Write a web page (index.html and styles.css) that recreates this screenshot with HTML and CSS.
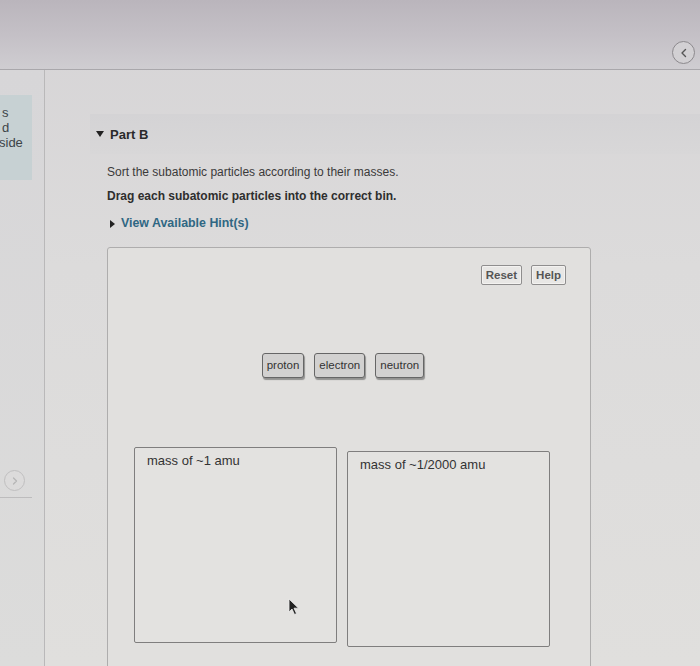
FILE: index.html
```html
<!DOCTYPE html>
<html>
<head>
<meta charset="utf-8">
<link rel="stylesheet" href="styles.css">
</head>
<body>
<div class="page">
  <header class="topbar">
    <span class="round-btn top-btn">
      <svg width="12" height="12" viewBox="0 0 12 12"><path d="M7.5 2.5 L4 6 L7.5 9.5" fill="none" stroke="#555" stroke-width="1.4" stroke-linecap="round" stroke-linejoin="round"/></svg>
    </span>
  </header>
  <div class="main">
    <aside class="sidebar">
      <div class="note">
        <div class="nl l1">s</div>
        <div class="nl l2">d</div>
        <div class="nl l3">side</div>
      </div>
      <div class="toggle-wrap">
        <span class="round-btn side-btn">
          <svg width="10" height="10" viewBox="0 0 10 10"><path d="M3.5 2 L6.5 5 L3.5 8" fill="none" stroke="#b5b5b5" stroke-width="1.2" stroke-linecap="round" stroke-linejoin="round"/></svg>
        </span>
      </div>
    </aside>
    <section class="content">
      <div class="part-head">
        <span class="caret-down"></span>
        <span class="part-title">Part B</span>
      </div>
      <div class="part-body">
        <p class="instr">Sort the subatomic particles according to their masses.</p>
        <p class="instr bold">Drag each subatomic particles into the correct bin.</p>
        <div class="hint"><span class="caret-right"></span>View Available Hint(s)</div>
        <div class="dnd">
          <div class="tools">
            <span class="tool-btn">Reset</span>
            <span class="tool-btn">Help</span>
          </div>
          <div class="tiles">
            <span class="tile">proton</span>
            <span class="tile">electron</span>
            <span class="tile">neutron</span>
          </div>
          <div class="bins">
            <div class="bin"><span class="bin-label">mass of ~1 amu</span>
              <svg class="cursor" width="12" height="18" viewBox="0 0 12 18"><path d="M1 1 L1 14 L4 11 L6.5 16.5 L8.5 15.6 L6 10.2 L10.5 10.2 Z" fill="#222" stroke="#eee" stroke-width="0.8"/></svg>
            </div>
            <div class="bin bin2"><span class="bin-label">mass of ~1/2000 amu</span></div>
          </div>
        </div>
      </div>
    </section>
  </div>
</div>
</body>
</html>
```

FILE: styles.css
```css
html, body {
  margin: 0;
  padding: 0;
}
body {
  width: 700px;
  height: 666px;
  overflow: hidden;
  font-family: "Liberation Sans", Arial, sans-serif;
  color: #333;
  background: #dad9d9;
}
.page {
  width: 700px;
  height: 666px;
  display: flex;
  flex-direction: column;
  background: linear-gradient(180deg, #d6d4d6 0%, #dcdbdb 40%, #e0dfdd 100%);
}
.topbar {
  height: 70px;
  flex: none;
  display: flex;
  justify-content: flex-end;
  align-items: flex-end;
  padding: 0 5px 5px 0;
  box-sizing: border-box;
  background: linear-gradient(180deg, #bab5bc 0%, #c4c0c6 50%, #cfcdd1 100%);
  border-bottom: 1px solid #a9a7ab;
}
.round-btn {
  display: flex;
  align-items: center;
  justify-content: center;
  border-radius: 50%;
  box-sizing: border-box;
}
.top-btn {
  width: 23px;
  height: 23px;
  border: 1.5px solid #8c898d;
  background: #d2d0d3;
}
.main {
  flex: 1;
  display: flex;
  min-height: 0;
}
.sidebar {
  width: 45px;
  flex: none;
  border-right: 1px solid #b9b8b9;
  box-sizing: border-box;
  background: linear-gradient(180deg, #d7d6d8, #dcdcdb);
}
.note {
  margin-top: 25px;
  width: 32px;
  height: 85px;
  background: #c7d1d3;
  padding-top: 10px;
  box-sizing: border-box;
  font-size: 13px;
  line-height: 15px;
  color: #3d4448;
}
.nl { white-space: nowrap; }
.l1 { padding-left: 2px; }
.l2 { padding-left: 2px; }
.l3 { margin-left: -1px; }
.toggle-wrap {
  margin-top: 290px;
  width: 28px;
  padding: 0 0 6px 4px;
  border-bottom: 1px solid #bdbcbd;
}
.side-btn {
  width: 21px;
  height: 21px;
  border: 1px solid #c0bfc0;
  background: #dcdbdb;
}
.content {
  flex: 1;
  padding-left: 45px;
}
.part-head {
  margin-top: 44px;
  height: 40px;
  display: flex;
  align-items: center;
  background: linear-gradient(180deg, #d4d3d5, #d8d7d8);
  padding-left: 6px;
}
.caret-down {
  width: 0;
  height: 0;
  border-left: 4.5px solid transparent;
  border-right: 4.5px solid transparent;
  border-top: 6px solid #222;
  margin-right: 6px;
}
.part-title {
  font-size: 13px;
  font-weight: bold;
  color: #2a2a2a;
}
.part-body {
  padding-left: 17px;
}
.instr {
  margin: 11px 0 0;
  font-size: 12px;
  line-height: 14px;
  color: #3a3a3a;
}
.instr.bold {
  margin-top: 10px;
  font-weight: bold;
  color: #2e2e2e;
}
.hint {
  margin-top: 13px;
  display: flex;
  align-items: center;
  font-size: 12.4px;
  line-height: 15px;
  font-weight: bold;
  color: #2f6783;
}
.caret-right {
  width: 0;
  height: 0;
  border-top: 4px solid transparent;
  border-bottom: 4px solid transparent;
  border-left: 5px solid #222;
  margin: 0 6px 0 3px;
}
.dnd {
  margin-top: 16px;
  width: 484px;
  height: 440px;
  border: 1px solid #aeadad;
  border-radius: 3px;
  box-sizing: border-box;
  background: #e1e0de;
}
.tools {
  display: flex;
  justify-content: flex-end;
  gap: 9px;
  padding: 17px 24px 0 0;
}
.tool-btn {
  font-size: 11.5px;
  font-weight: bold;
  color: #555;
  border: 1px solid #8f8e8e;
  border-radius: 2px;
  padding: 3px 4px;
  background: #e8e7e5;
  box-shadow: inset 0 0 0 1px #f3f2f0;
}
.tiles {
  display: flex;
  justify-content: center;
  gap: 10px;
  margin-top: 68px;
  padding-right: 12px;
}
.tile {
  font-size: 11.5px;
  color: #333;
  background: #d2d1d0;
  border: 1px solid #666;
  border-radius: 3px;
  padding: 5px 4px 6px;
  box-shadow: 1px 2px 1px rgba(0,0,0,0.35);
}
.bins {
  display: flex;
  gap: 10px;
  margin-top: 69px;
  padding-left: 26px;
  align-items: flex-start;
}
.bin {
  position: relative;
  width: 203px;
  height: 196px;
  border: 1px solid #7f7e7e;
  border-radius: 2px;
  box-sizing: border-box;
  background: #e3e2e0;
  padding: 3px 0 0 12px;
}
.bin2 {
  margin-top: 4px;
}
.bin-label {
  font-size: 13px;
  color: #333;
}
.cursor {
  position: absolute;
  left: 153px;
  top: 150px;
}
```
